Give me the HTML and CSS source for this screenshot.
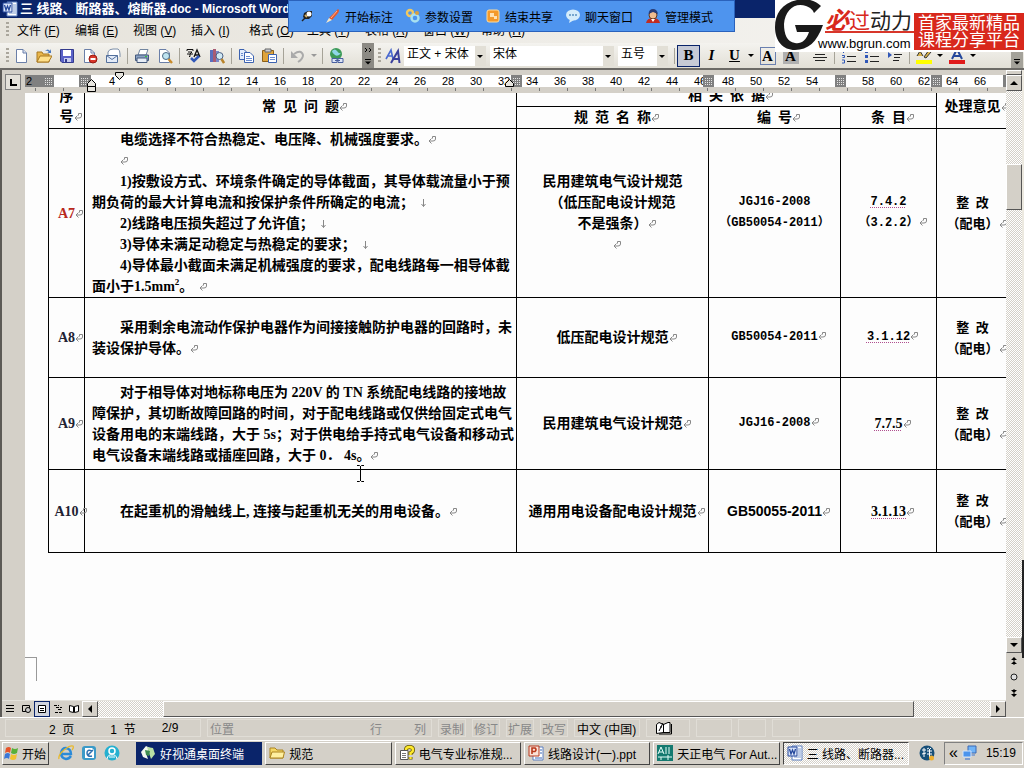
FILE: index.html
```html
<!DOCTYPE html>
<html lang="zh-CN">
<head>
    <meta charset="UTF-8">
    <meta name="viewport" content="width=device-width, initial-scale=1.0">
    <title>三 线路、断路器、熔断器.doc - Microsoft Word</title>
    <link rel="stylesheet" href="styles.css">
</head>
<body>
    <svg class="defs" aria-hidden="true">
        <symbol id="ret" viewBox="0 0 8 8"><path d="M3.500 2.500L1 5L3.500 7.500M1 5H5Q7.500 5 7.500 3V.5H4.500V2.500" fill="none" stroke="#888"/></symbol>
        <symbol id="down" viewBox="0 0 8 8"><path d="M3.500 0V7.500M1.500 5L3.500 7.500L5.500 5" fill="none" stroke="#888"/></symbol>
        <symbol id="word" viewBox="0 0 16 16"><path d="M5 1H15V15H5Z" fill="#fff" stroke="#5b7fc0"/><path d="M11 4H14M11 6H14M11 8H14M11 10H14M7 12H14" stroke="#7c9ad0"/><path d="M1 2H10V11H1Z" fill="#dbe6fa" stroke="#24479b"/><path d="M2.500 4L4 9L5.500 5L7 9L8.500 4" fill="none" stroke="#24479b" stroke-width="1.300"/></symbol>
    </svg>

    <header class="titlebar">
        <svg class="icon"><use href="#word"/></svg>
        <h1>三 线路、断路器、熔断器<span>.doc - Microsoft Word</span></h1>
    </header>

    <nav class="menubar">
        <i class="grip"></i>
        <a href="#">文件 (<u>F</u>)</a>
        <a href="#">编辑 (<u>E</u>)</a>
        <a href="#">视图 (<u>V</u>)</a>
        <a href="#">插入 (<u>I</u>)</a>
        <a href="#">格式 (<u>O</u>)</a>
        <a href="#">工具 (<u>T</u>)</a>
        <a href="#">表格 (<u>A</u>)</a>
        <a href="#">窗口 (<u>W</u>)</a>
        <a href="#">帮助 (<u>H</u>)</a>
    </nav>

    <div class="toolbar">
        <i class="grip"></i>
        <button aria-label="新建"><svg class="icon" viewBox="0 0 16 16"><path d="M3.500 1.500H10L13.500 5V14.500H3.500Z" fill="#fff" stroke="#6a7fa8"/><path d="M10 1.500V5H13.500" fill="#d8e2f4" stroke="#6a7fa8"/></svg></button>
        <button aria-label="打开"><svg class="icon" viewBox="0 0 16 16"><path d="M1 14V4H6L7 6H13V14Z" fill="#e9b64a" stroke="#a87820"/><path d="M1 14L4 8H16L12.500 14Z" fill="#ffe08a" stroke="#a87820"/><path d="M9 3Q12 0 14 3L15 1V5H11L13 4Q11 2 9 3" fill="#4a7ac0"/></svg></button>
        <button aria-label="保存"><svg class="icon" viewBox="0 0 16 16"><path d="M1.500 1.500H14.500V14.500H3L1.500 13Z" fill="#5a62c8" stroke="#333a8c"/><path d="M4 2H12V8H4Z" fill="#fff"/><path d="M5 10H12V14H5Z" fill="#c8cdf0"/><path d="M6 11H8V14H6Z" fill="#333a8c"/></svg></button>
        <button aria-label="权限"><svg class="icon" viewBox="0 0 16 16"><path d="M2.500 1.500H9L12.500 5V14.500H2.500Z" fill="#fff" stroke="#6a7fa8"/><path d="M9 1.500V5H12.500" fill="none" stroke="#6a7fa8"/><circle cx="11" cy="11" r="4" fill="#d8362a" stroke="#961a12"/><path d="M8.500 11H13.500" stroke="#fff" stroke-width="2"/></svg></button>
        <button aria-label="电子邮件"><svg class="icon" viewBox="0 0 16 16"><path d="M3 8V4Q4 1 8 1H13Q15 2 15 6V9" fill="#fff" stroke="#7b8ea8"/><path d="M1.500 7.500H12.500V14.500H1.500Z" fill="#e4ecf8" stroke="#54709c"/><path d="M1.500 7.500L7 11.500L12.500 7.500" fill="none" stroke="#54709c"/></svg></button>
        <i class="sep"></i>
        <button aria-label="打印"><svg class="icon" viewBox="0 0 16 16"><path d="M4 7L6 1.500H14L12 7Z" fill="#fff" stroke="#7286a0"/><path d="M1.500 7H14.500V12.500H1.500Z" fill="#8ba3c4" stroke="#44597c"/><path d="M3 10H13V14.500H3Z" fill="#e6edf6" stroke="#44597c"/><path d="M11 8.500H13" stroke="#3c3"/></svg></button>
        <button aria-label="打印预览"><svg class="icon" viewBox="0 0 16 16"><path d="M2.500 1.500H9L12.500 5V14.500H2.500Z" fill="#fff" stroke="#6a7fa8"/><circle cx="9" cy="8" r="3.500" fill="#bfe4f0" stroke="#4c6a84"/><path d="M11.500 11L15 15" stroke="#c88a2a" stroke-width="2.400"/></svg></button>
        <i class="sep"></i>
        <button aria-label="拼写和语法"><svg class="icon" viewBox="0 0 16 16"><path d="M1 3V1.500H7V3M2 4H6L4 6V8.500H3M1 6H7" fill="none" stroke="#111"/><path d="M8 9L11 2L14 9M9 7H13" fill="none" stroke="#111" stroke-width="1.300"/><path d="M5 10L8 13L13 8" fill="none" stroke="#3158b8" stroke-width="2.600"/></svg></button>
        <button aria-label="信息检索"><svg class="icon" viewBox="0 0 16 16"><path d="M1 2H4V14H1Z" fill="#5a6fbe"/><path d="M4 1H7V14H4Z" fill="#a85c74"/><path d="M7 3H10V14H7Z" fill="#7a88cc"/><circle cx="10.500" cy="8" r="3.500" fill="#cfe8f4" stroke="#4c5f84"/><path d="M12.500 11L15 15" stroke="#b8832a" stroke-width="2.400"/></svg></button>
        <i class="sep"></i>
        <button aria-label="复制"><svg class="icon" viewBox="0 0 16 16"><path d="M1.500 1.500H6L8.500 4V11.500H1.500Z" fill="#e4edfc" stroke="#3c62b0"/><path d="M6.500 4.500H12L15.500 8V14.500H6.500Z" fill="#fff" stroke="#3c62b0"/><path d="M8 8.500H12M8 10.500H14M8 12.500H14M3 5.500H5M3 7.500H5" stroke="#6b8cd0"/></svg></button>
        <button aria-label="粘贴"><svg class="icon" viewBox="0 0 16 16"><path d="M1.500 2.500H12.500V13.500H1.500Z" fill="#dfa43c" stroke="#8c6018"/><path d="M4 1H10V4H4Z" fill="#c9ccd4" stroke="#666"/><path d="M7.500 6.500H15.500V14.500H7.500Z" fill="#fff" stroke="#3c62b0"/><path d="M9 9.500H14M9 11.500H14" stroke="#6b8cd0"/></svg></button>
        <i class="sep"></i>
        <button aria-label="撤消" disabled><svg class="icon" viewBox="0 0 16 16"><path d="M4 6Q11 1 13 7Q13 11 8 14" fill="none" stroke="#aaa" stroke-width="2"/><path d="M1 3V10H8Z" fill="#aaa"/></svg></button>
        <button class="drop off" aria-label="撤消列表" disabled></button>
        <i class="sep"></i>
        <button aria-label="超链接"><svg class="icon" viewBox="0 0 16 16"><circle cx="7" cy="6" r="6" fill="#3d9a58"/><path d="M3 3Q6 0 8 3T12 5Q9 9 6 7T3 3" fill="#8fd6e8"/><path d="M3 10.500H8V14.500H3ZM9 10.500H14V14.500H9ZM6 12.500H11" fill="#dce4f6" stroke="#4a60a0"/></svg></button>
        <button class="more" aria-label="工具栏选项"><svg viewBox="0 0 12 25"><path d="M3 5L5 7L3 9M7 5L9 7L7 9M3 16.500H9" fill="none" stroke="#000"/><path d="M3 18.500H9L6 21.500Z"/></svg></button>
        <i class="grip"></i>
        <button aria-label="格式窗格"><svg class="icon" viewBox="0 0 16 16"><path d="M1 11L6 2L8 11M3 8H8" fill="none" stroke="#4a6ad0" stroke-width="1.600"/><path d="M6 15L13 3L14.500 15M9 11H14" fill="none" stroke="#3a3f9c" stroke-width="2"/></svg></button>
        <label class="combo style"><select aria-label="样式"><option>正文 + 宋体</option></select></label>
        <label class="combo font"><select aria-label="字体"><option>宋体</option></select></label>
        <label class="combo size"><select aria-label="字号"><option>五号</option></select></label>
        <i class="sep"></i>
        <button class="letter pressed"><b>B</b></button>
        <button class="letter"><em>I</em></button>
        <button class="letter"><u>U</u></button>
        <button class="drop" aria-label="下划线列表"></button>
        <button class="letter"><span class="framed">A</span></button>
        <button class="letter"><span class="shaded">A</span></button>
        <button class="align" aria-label="居中"><svg class="icon" viewBox="0 0 16 16"><path d="M1 3.500H15M3 6.500H13M1 9.500H15M3 12.500H13" stroke="#222"/></svg></button>
        <i class="sep"></i>
        <button aria-label="编号"><svg class="icon" viewBox="0 0 16 16"><path d="M2.500 1V5M1 7.500H3.500V9.500H1.500M1 12H3.500V15H1" fill="none" stroke="#3158b8"/><path d="M6 3.500H15M6 8.500H15M6 13.500H15" stroke="#222"/></svg></button>
        <button aria-label="项目符号"><svg class="icon" viewBox="0 0 16 16"><path d="M1 2H4V5H1ZM1 7H4V10H1ZM1 12H4V15H1Z" fill="#3158b8"/><path d="M6 3.500H15M6 8.500H15M6 13.500H15" stroke="#222"/></svg></button>
        <button aria-label="增加缩进量"><svg class="icon" viewBox="0 0 16 16"><path d="M1 3.500H15M7 6.500H15M7 9.500H13M6 12.500H12" stroke="#222"/><path d="M1 4L5 7L1 10Z" fill="#3158b8"/></svg></button>
        <i class="sep"></i>
        <button aria-label="突出显示"><svg class="icon" viewBox="0 0 16 16"><path d="M1 8L4 3L7 8M8 9L13 2L15 4L10 10Z" fill="#d8b24a" stroke="#333"/><path d="M0 12H16V16H0Z" fill="#ff0"/></svg></button>
        <button class="drop" aria-label="突出显示颜色"></button>
        <button aria-label="字体颜色"><svg class="icon" viewBox="0 0 16 16"><path d="M3 11L8 1L13 11M5 8H11" fill="none" stroke="#24479b" stroke-width="2"/><path d="M0 12H16V16H0Z" fill="#e01b1b"/></svg></button>
        <button class="drop" aria-label="字体颜色列表"></button>
        <button class="more last" aria-label="工具栏选项"><svg viewBox="0 0 12 25"><path d="M3 16.500H9" stroke="#000"/><path d="M3 18.500H9L6 21.500Z"/></svg></button>
    </div>

    <div class="workspace">
        <div class="editor">
            <div class="ruler">
                <button class="tabstop" aria-label="制表符"><svg viewBox="0 0 14 14"><path d="M5 4V10H11" fill="none" stroke="#000" stroke-width="2"/></svg></button>
                <div class="scale">
                    <span class="margin">2</span>
                    <span class="blank"></span>
                    <span>4</span><span>6</span><span>8</span><span>10</span><span>12</span><span>14</span><span>16</span><span>18</span><span>20</span><span>22</span><span>24</span><span>26</span><span>28</span><span>30</span><span>32</span><span>34</span><span>36</span><span>38</span><span>40</span><span>42</span><span>44</span><span>46</span><span>48</span><span>50</span><span>52</span><span>54</span><span></span><span>58</span><span>60</span><span>62</span><span>64</span><span>66</span>
                    <!-- column markers and indents sit over the scale -->
                    <svg class="markers" viewBox="0 0 981 23">
                        <defs><pattern id="dots" width="2" height="2" patternUnits="userSpaceOnUse"><path d="M0 0H1V1H0Z" fill="#e4e4e4"/></pattern></defs>
                        <path d="M54 5H66V17H54ZM486 5H497V17H486ZM678 5H689V17H678ZM810 5H821V17H810ZM906 5H917V17H906ZM978 5H981V17H978Z" fill="#808080"/>
                        <path d="M20 7H28V15H20ZM56 7H64V15H56ZM488 7H496V15H488ZM680 7H688V15H680ZM812 7H820V15H812ZM908 7H916V15H908Z" fill="url(#dots)"/>
                        <g fill="#e8e6e0" stroke="#000">
                            <path d="M90.500 2.500H98.500V5.500L94.500 9.500L90.500 5.500Z"/>
                            <path d="M62.500 16.500V13.500L66.500 9.500L70.500 13.500V16.500ZM62.500 16.500H70.500V21.500H62.500Z"/>
                            <path d="M480.500 16.500V13.500L484.500 9.500L488.500 13.500V16.500Z"/>
                        </g>
                    </svg>
                </div>
            </div>

            <main class="document">
                <div class="page">
                    <table>
                        <colgroup><col class="c-id"><col class="c-issue"><col class="c-name"><col class="c-code"><col class="c-item"><col class="c-opinion"></colgroup>
                        <thead>
                            <tr>
                                <th rowspan="2" class="no">序<br>号<svg class="mark"><use href="#ret"/></svg></th>
                                <th rowspan="2">常&nbsp;&nbsp;见&nbsp;&nbsp;问&nbsp;&nbsp;题<svg class="mark"><use href="#ret"/></svg></th>
                                <th colspan="3">相&nbsp;&nbsp;关&nbsp;&nbsp;依&nbsp;&nbsp;据<svg class="mark"><use href="#ret"/></svg></th>
                                <th rowspan="2">处理意见<svg class="mark"><use href="#ret"/></svg></th>
                            </tr>
                            <tr class="sub">
                                <th>规&nbsp;&nbsp;范&nbsp;&nbsp;名&nbsp;&nbsp;称<svg class="mark"><use href="#ret"/></svg></th>
                                <th>编&nbsp;&nbsp;号<svg class="mark"><use href="#ret"/></svg></th>
                                <th>条&nbsp;&nbsp;目<svg class="mark"><use href="#ret"/></svg></th>
                            </tr>
                        </thead>
                        <tbody>
                            <tr class="a7">
                                <td class="no red">A7<svg class="mark"><use href="#ret"/></svg></td>
                                <td class="issue">
                                    <p>电缆选择不符合热稳定、电压降、机械强度要求。<svg class="mark"><use href="#ret"/></svg></p>
                                    <p><svg class="mark"><use href="#ret"/></svg></p>
                                    <p>1)按敷设方式、环境条件确定的导体截面，其导体载流量小于预<br>期负荷的最大计算电流和按保护条件所确定的电流；<svg class="mark gap"><use href="#down"/></svg></p>
                                    <p>2)线路电压损失超过了允许值；<svg class="mark gap"><use href="#down"/></svg></p>
                                    <p>3)导体未满足动稳定与热稳定的要求；<svg class="mark gap"><use href="#down"/></svg></p>
                                    <p>4)导体最小截面未满足机械强度的要求，配电线路每一相导体截<br>面小于1.5mm<sup>2</sup>。<svg class="mark gap"><use href="#ret"/></svg></p>
                                </td>
                                <td>民用建筑电气设计规范<br>（低压配电设计规范<br>不是强条）<svg class="mark"><use href="#ret"/></svg><br><svg class="mark"><use href="#ret"/></svg></td>
                                <td class="code">JGJ16-2008<br>（GB50054-2011）</td>
                                <td class="code"><span class="spell">7.4.2</span><br>（3.2.2）<svg class="mark"><use href="#ret"/></svg></td>
                                <td class="opinion">整&nbsp; 改<br>（配电）<svg class="mark"><use href="#ret"/></svg></td>
                            </tr>
                            <tr class="a8">
                                <td class="no">A8<svg class="mark"><use href="#ret"/></svg></td>
                                <td class="issue">
                                    <p>采用剩余电流动作保护电器作为间接接触防护电器的回路时，未<br>装设保护导体。<svg class="mark"><use href="#ret"/></svg></p>
                                </td>
                                <td>低压配电设计规范<svg class="mark"><use href="#ret"/></svg></td>
                                <td class="code">GB50054-2011<svg class="mark"><use href="#ret"/></svg></td>
                                <td class="code"><span class="spell">3.1.12</span><svg class="mark"><use href="#ret"/></svg></td>
                                <td class="opinion">整&nbsp; 改<br>（配电）<svg class="mark"><use href="#ret"/></svg></td>
                            </tr>
                            <tr class="a9">
                                <td class="no">A9<svg class="mark"><use href="#ret"/></svg></td>
                                <td class="issue">
                                    <p>对于相导体对地标称电压为 220V 的 TN 系统配电线路的接地故<br>障保护，其切断故障回路的时间，对于配电线路或仅供给固定式电气<br>设备用电的末端线路，大于 5s；对于供电给手持式电气设备和移动式<br>电气设备末端线路或插座回路，大于 0．&nbsp;4s。<svg class="mark"><use href="#ret"/></svg></p>
                                </td>
                                <td>民用建筑电气设计规范<svg class="mark"><use href="#ret"/></svg></td>
                                <td class="code">JGJ16-2008<svg class="mark"><use href="#ret"/></svg></td>
                                <td><span class="spell">7.7.5</span><svg class="mark"><use href="#ret"/></svg></td>
                                <td class="opinion">整&nbsp; 改<br>（配电）<svg class="mark"><use href="#ret"/></svg></td>
                            </tr>
                            <tr class="a10">
                                <td class="no">A10<svg class="mark"><use href="#ret"/></svg></td>
                                <td class="issue">
                                    <p>在起重机的滑触线上, 连接与起重机无关的用电设备。<svg class="mark"><use href="#ret"/></svg></p>
                                </td>
                                <td>通用用电设备配电设计规范<svg class="mark"><use href="#ret"/></svg></td>
                                <td class="arial">GB50055-2011<svg class="mark"><use href="#ret"/></svg></td>
                                <td><span class="spell">3.1.13</span><svg class="mark"><use href="#ret"/></svg></td>
                                <td class="opinion">整&nbsp; 改<br>（配电）<svg class="mark"><use href="#ret"/></svg></td>
                            </tr>
                        </tbody>
                    </table>
                    <i class="corner"></i>
                </div>
                <svg class="ibeam" viewBox="0 0 9 17"><path d="M1 .5H3.500L4.500 1.500L5.500 .5H8M4.500 1V16M1 16.500H3.500L4.500 15.500L5.500 16.500H8" fill="none" stroke="#000"/></svg>
            </main>

            <div class="hscroll">
                <div class="views">
                    <button aria-label="普通视图"><svg viewBox="0 0 10 10"><path d="M1 1.500H9M1 4.500H9M1 7.500H9" stroke="#000"/></svg></button>
                    <button aria-label="Web版式"><svg viewBox="0 0 10 10"><path d="M1.500 1.500H8.500V7.500H1.500Z" fill="none" stroke="#000"/><circle cx="7" cy="6" r="2.500" fill="#ccc" stroke="#000"/></svg></button>
                    <button class="on" aria-label="页面视图"><svg viewBox="0 0 10 10"><path d="M1.500 1.500H8.500V8.500H1.500Z" fill="#fff" stroke="#000"/><path d="M3 4.500H7M3 6.500H7" stroke="#000"/></svg></button>
                    <button aria-label="大纲视图"><svg viewBox="0 0 10 10"><path d="M1 1.500H6M3 3.500H9M5 5.500H9M2 8.500H9" stroke="#000" stroke-dasharray="3 1"/></svg></button>
                    <button aria-label="阅读版式"><svg viewBox="0 0 10 10"><path d="M.5 1.500L4.500 2.500V8.500L.5 7.500ZM9.500 1.500L5.500 2.500V8.500L9.500 7.500Z" fill="#fff" stroke="#000"/></svg></button>
                </div>
                <button class="arrow" aria-label="向左"><svg viewBox="0 0 12 12"><path d="M8 2V10L4 6Z"/></svg></button>
                <div class="track"><div class="thumb"></div></div>
                <button class="arrow" aria-label="向右"><svg viewBox="0 0 12 12"><path d="M4 2V10L8 6Z"/></svg></button>
            </div>
        </div>

        <div class="vscroll">
            <i class="split"></i>
            <button class="arrow" aria-label="向上"><svg viewBox="0 0 12 12"><path d="M2 8H10L6 4Z"/></svg></button>
            <div class="track"><div class="thumb"></div></div>
            <button class="arrow" aria-label="向下"><svg viewBox="0 0 12 12"><path d="M2 4H10L6 8Z"/></svg></button>
            <button class="browse" aria-label="前一页"><svg viewBox="0 0 12 12"><path d="M3 5L6 2L9 5ZM5.500 5H6.500V6H5.500ZM3 9L6 6L9 9ZM5.500 9H6.500V10H5.500Z"/></svg></button>
            <button class="browse" aria-label="选择浏览对象"><svg viewBox="0 0 12 12"><circle cx="6" cy="6" r="3" fill="#ddd" stroke="#222"/></svg></button>
            <button class="browse" aria-label="下一页"><svg viewBox="0 0 12 12"><path d="M3 3L6 6L9 3ZM5.500 2H6.500V3H5.500ZM3 7L6 10L9 7ZM5.500 6H6.500V7H5.500Z"/></svg></button>
        </div>
        <div class="edge"></div>
    </div>

    <div class="statusbar">
        <div class="pane place"><span>2&nbsp; 页</span><span>1&nbsp; 节</span><span>2/9</span></div>
        <div class="pane pos"><span>位置</span><span class="row">行</span><span class="col">列</span></div>
        <span class="pane mode">录制</span>
        <span class="pane mode">修订</span>
        <span class="pane mode">扩展</span>
        <span class="pane mode">改写</span>
        <span class="pane lang">中文 (中国)</span>
        <span class="pane book"><svg viewBox="0 0 18 14"><path d="M1.500 3.500L4 1.500L8.500 3.500L13 1.500H15V11.500H8.500L1.500 12.500Z" fill="#fff" stroke="#000"/><path d="M8.500 3V12M4 10L8 2M5 6H7M16.500 3V13H4" fill="none" stroke="#000"/></svg></span>
        <span class="pane empty"></span>
        <span class="pane small"></span>
        <span class="pane small"></span>
    </div>

    <footer class="taskbar">
        <button class="start"><svg class="icon" viewBox="0 0 16 16"><path d="M2 3Q5 1 7 3L6 8Q4 6 1 8Z" fill="#e8542a"/><path d="M8 3Q11 5 14 3L13 8Q10 10 7 8Z" fill="#58b038"/><path d="M1 9Q4 7 6 9L5 14Q3 12 0 14Z" fill="#3b78d8"/><path d="M7 9Q10 11 13 9L12 14Q9 16 6 14Z" fill="#f2c230"/></svg>开始</button>
        <div class="quick">
            <a href="#" aria-label="Internet Explorer"><svg class="icon" viewBox="0 0 16 16"><path d="M13 11Q11 14 8 14Q3 13 3 8Q4 3 8 3Q13 4 13 9H4" fill="none" stroke="#2b8ad8" stroke-width="2.400"/><path d="M1 14Q0 10 6 5T15 1Q16 3 14 5" fill="none" stroke="#e8b92c" stroke-width="1.300"/></svg></a>
            <a href="#" aria-label="显示桌面"><svg class="icon" viewBox="0 0 16 16"><rect x="1" y="1" width="14" height="14" rx="3" fill="#3b9ac8"/><path d="M4 3H11L13 5V13H4Z" fill="#fff"/><path d="M12 5L7 10M11 6Q6 4 6 8T11 11" fill="none" stroke="#2a6fb0" stroke-width="1.500"/></svg></a>
            <a href="#" aria-label="会议"><svg class="icon" viewBox="0 0 16 16"><circle cx="8" cy="8" r="7.500" fill="#25b0d0"/><circle cx="8" cy="6" r="3" fill="none" stroke="#fff" stroke-width="1.500"/><path d="M3 14Q4 9 8 10Q12 9 13 14M5 12H11" fill="none" stroke="#fff"/></svg></a>
        </div>
        <div class="tasks">
            <button class="navy"><svg class="icon" viewBox="0 0 16 16"><path d="M1 7L6 1L10 3L6 8L8 14L3 12Z" fill="#f2f8ee"/><path d="M7 2L13 3L15 9L11 14L9 8Z" fill="#b9e0a4"/><path d="M5 5L10 6L9 11L6 10Z" fill="#3d8c50"/></svg><span>好视通桌面终端</span></button>
            <button><svg class="icon" viewBox="0 0 16 16"><path d="M1 13V3H6L8 5H14V13Z" fill="#f5d867" stroke="#ac8420"/><path d="M1 13L3 7H15.500L14 13Z" fill="#fff0a0" stroke="#ac8420"/></svg><span>规范</span></button>
            <button><svg class="icon" viewBox="0 0 16 16"><path d="M1.500 5.500H9V14.500H1.500Z" fill="#fff" stroke="#555"/><path d="M3 8.500H7M3 10.500H7M3 12.500H7" stroke="#777"/><path d="M7 5Q7 2 10.500 2T14 5Q14 7 11.500 8V10M11.500 12V14.500" fill="none" stroke="#665800" stroke-width="4"/><path d="M7 5Q7 2 10.500 2T14 5Q14 7 11.500 8V10M11.500 12V14" fill="none" stroke="#ffe92c" stroke-width="2.400"/></svg><span>电气专业标准规...</span></button>
            <button><svg class="icon" viewBox="0 0 16 16"><path d="M5 2H15V15H5Z" fill="#fff" stroke="#5b7fc0"/><path d="M12 5H14M12 8H14M7 13H14" stroke="#7c9ad0" stroke-width="1.500"/><path d="M1 1H11V11H1Z" fill="#fbe2d8" stroke="#b8391c"/><path d="M4 9V3H7Q9 4.500 7 6.500H4" fill="none" stroke="#b8391c" stroke-width="1.600"/></svg><span>线路设计(一).ppt</span></button>
            <button><svg class="icon" viewBox="0 0 16 16"><path d="M0 0H16V16H0Z" fill="#147a70"/><path d="M1 9L4 2L7 9M2 7H6M9 2V9M12 2V9M1 12H15M11 10V15M4 12V15" fill="none" stroke="#e6fffa"/></svg><span>天正电气 For Aut...</span></button>
            <button class="active"><svg class="icon"><use href="#word"/></svg><span>三 线路、断路器...</span></button>
        </div>
        <a href="#" class="ime" aria-label="输入法"><svg class="icon" viewBox="0 0 16 16"><circle cx="8" cy="8" r="7.500" fill="#174f78"/><path d="M3 5H7M5 3V12M3 9L7 8M8 4L10 3M12 3L10 5M8 6H13M8 9H13M10.500 5V13" fill="none" stroke="#fff"/><circle cx="12.500" cy="13" r="2.500" fill="#f0b030"/></svg></a>
        <div class="tray">
            <span class="expand">«</span>
            <svg class="icon" viewBox="0 0 16 16"><path d="M6 1H14V8H6Z" fill="#70b4f8" stroke="#3a68b4"/><path d="M9 9H13V11H9Z" fill="#8aa4cc"/><path d="M1 6H9V12H1Z" fill="#4c94ec" stroke="#d4e4fa"/><path d="M3 13H8V15H3Z" fill="#7f9ccc"/></svg>
            <time>15:19</time>
        </div>
    </footer>

    <!-- floating screen-share bar -->
    <div class="sharebar">
        <button aria-label="固定"><svg class="pin" viewBox="0 0 12 12"><path d="M3 3L7 1H11V6L8 9H4L2 7Z" fill="#222"/><circle cx="8" cy="4" r="2.500" fill="#fff"/><path d="M4 5L6 7" stroke="#d8b060" stroke-width="2"/><path d="M1 11L4 8" stroke="#222" stroke-width="1.500"/></svg></button>
        <button><svg class="icon" viewBox="0 0 16 16"><path d="M13 1Q15 2 13 5L7 12L4 10Z" fill="#e8582c"/><path d="M4 10L7 12L1 15Z" fill="#f4e6c8"/><path d="M12 3L6 10" stroke="#ffb090"/></svg>开始标注</button>
        <button><svg class="icon" viewBox="0 0 16 16"><circle cx="5" cy="5" r="3" fill="none" stroke="#f0c860" stroke-width="2.400"/><circle cx="10" cy="10" r="3.500" fill="none" stroke="#a8e0f0" stroke-width="2.400"/><circle cx="12" cy="5" r="2" fill="#d8a040"/></svg>参数设置</button>
        <button><svg class="icon" viewBox="0 0 16 16"><rect x="2" y="2" width="12" height="12" rx="2" fill="#f49a2c" stroke="#ffdc9c"/><path d="M5 5H9V9H5ZM9 8H12V11H9Z" fill="#ffe2b4"/></svg>结束共享</button>
        <button><svg class="icon" viewBox="0 0 16 16"><ellipse cx="8" cy="7" rx="7" ry="5.500" fill="#d4ecfa"/><path d="M5 11L4 15L9 12Z" fill="#d4ecfa"/><path d="M4 7H6M7 7H9M10 7H12" stroke="#5890c0" stroke-width="1.500"/></svg>聊天窗口</button>
        <button><svg class="icon" viewBox="0 0 16 16"><path d="M1 15Q2 10 8 10T15 15Z" fill="#c02c20"/><circle cx="8" cy="7" r="4" fill="#f0bc90" stroke="#603820"/><path d="M3.500 6Q4 1 8 1T13 6L8 4Z" fill="#283c78"/><path d="M6 11L8 14L10 11Z" fill="#fff"/></svg>管理模式</button>
    </div>

    <div class="brand">
        <svg class="logo" viewBox="0 0 50 52"><path d="M46 6C40 0 31 -2 22 0C7 3 0 14 0 27C0 41 8 50 20 50C33 50 42 42 48 25H20L22 32H34C31 41 26 44 20 43C12 42 9 34 9 24C10 10 20 2 31 6C36 8 38 10 39 13Z" fill="#1a1a1a"/></svg>
        <div class="brandtext">
            <strong><em>必</em><span>过</span>动力</strong>
            <small>www.bgrun.com</small>
        </div>
        <p class="slogan">首家最新精品<br>课程分享平台</p>
    </div>
</body>
</html>
```
FILE: styles.css
```css
* {
    box-sizing: border-box;
}
body {
    margin: 0;
    height: 100vh;
    display: flex;
    flex-direction: column;
    overflow: hidden;
    background: #d4d0c8;
    color: #000;
    font-family: "Liberation Sans", "Noto Sans CJK SC", sans-serif;
    font-size: 12px;
    text-spacing-trim: space-all;
}
button {
    margin: 0;
    padding: 0;
    border: none;
    background: none;
    color: inherit;
    font: inherit;
}
a {
    color: inherit;
    text-decoration: none;
}
svg {
    display: block;
}
.defs {
    position: absolute;
    width: 0;
    height: 0;
}
.icon {
    width: 16px;
    height: 16px;
    flex: none;
}

/* title and menu */
.titlebar {
    flex: none;
    display: flex;
    align-items: center;
    gap: 2px;
    height: 18px;
    padding-left: 2px;
    background: #0a246a;
    color: #fff;
}
.titlebar h1 {
    margin: 0;
    font-size: 13px;
    line-height: 18px;
    white-space: nowrap;
}
.titlebar h1 span {
    font-size: 12px;
}
.menubar {
    flex: none;
    display: flex;
    align-items: center;
    height: 25px;
    padding: 0 0 2px 6px;
    background: linear-gradient(to right, #e6e3db, #f6f5f2);
}
.menubar a {
    width: 58px;
    white-space: nowrap;
}
.grip {
    flex: none;
    width: 3px;
    height: 15px;
    margin-right: 8px;
    background: repeating-linear-gradient(#aaa69c 0 2px, transparent 2px 4px);
}

/* toolbar */
.toolbar {
    flex: none;
    display: flex;
    align-items: center;
    height: 27px;
    padding-left: 6px;
    background: linear-gradient(#f4f3ef, #e2dfd6);
    border-bottom: 2px solid #6c6a66;
}
.toolbar .grip {
    margin-right: 0;
}
.toolbar button {
    flex: none;
    display: flex;
    align-items: center;
    justify-content: center;
    width: 23px;
    height: 22px;
}
.toolbar .sep {
    flex: none;
    width: 6px;
    height: 16px;
    background: linear-gradient(#a6a398, #a6a398) 3px 0 / 1px 100% no-repeat;
}
.toolbar .drop {
    width: 10px;
}
.drop::before {
    content: "";
    border: 3px solid transparent;
    border-top-color: #000;
    border-bottom: none;
}
.drop.off::before {
    border-top-color: #999;
}
.toolbar .more {
    width: 12px;
    height: 25px;
    margin: 0 4px 0 14px;
    background: #8c8a84;
}
.toolbar .more.last {
    margin: 0 1px 0 auto;
    background: #a4a29a;
}
.more svg {
    width: 12px;
    height: 25px;
}
.combo {
    position: relative;
    flex: none;
    height: 20px;
    margin-right: 4px;
    background: #fff;
}
.combo select {
    display: block;
    width: 100%;
    height: 100%;
    padding: 0 0 4px 3px;
    border: none;
    background: transparent;
    color: #000;
    font: inherit;
    appearance: none;
}
.combo::after {
    content: "";
    position: absolute;
    right: 3px;
    top: 9px;
    border: 3px solid transparent;
    border-top-color: #000;
    border-bottom: none;
}
.combo.style {
    width: 82px;
    background: linear-gradient(to right, #fff 71px, #e2dfd6 71px);
}
.combo.font {
    width: 124px;
    background: linear-gradient(to right, #fff 113px, #e2dfd6 113px);
}
.combo.size {
    width: 50px;
    margin-right: 3px;
    background: linear-gradient(to right, #fff 39px, #e2dfd6 39px);
}
.toolbar .letter {
    font-family: "Liberation Serif", serif;
    font-size: 15px;
    font-weight: bold;
}
.toolbar .pressed {
    background: #c6cad6;
    border: 1px solid #0a246a;
}
.framed {
    width: 16px;
    line-height: 16px;
    border: 1px solid #6a80b0;
}
.shaded {
    width: 16px;
    line-height: 16px;
    background: #b0b0b0;
}
.toolbar .align {
    margin-left: 6px;
}

/* workspace */
.workspace {
    flex: 1;
    display: flex;
    min-height: 0;
}
.editor {
    flex: 1;
    min-width: 0;
    display: flex;
    flex-direction: column;
    border-left: 2px solid #5c5a56;
}
.ruler {
    flex: none;
    display: flex;
    align-items: center;
    gap: 4px;
    height: 23px;
    padding-left: 3px;
}
.tabstop {
    flex: none;
    width: 16px;
    height: 16px;
    border: 1px solid #808080;
    background: #e4e1da;
}
.scale {
    position: relative;
    flex: 1;
    display: flex;
    height: 23px;
    overflow: hidden;
    background:
        repeating-linear-gradient(to right, transparent 0 10px, #777 10px 11px, transparent 11px 28px) 0 18px / 100% 3px no-repeat,
        linear-gradient(#fff, #fff) 0 5px / 100% 12px no-repeat;
}
.scale span {
    flex: none;
    width: 28px;
    font-size: 11px;
    line-height: 23px;
    text-align: center;
}
.scale .margin {
    width: 29px;
    height: 12px;
    margin-top: 5px;
    padding-left: 1px;
    background: #808080;
    line-height: 12px;
    text-align: left;
}
.scale .blank {
    width: 44px;
}
.markers {
    position: absolute;
    left: 0;
    top: 0;
    width: 981px;
    height: 23px;
}
.document {
    position: relative;
    flex: 1;
    min-height: 0;
    padding-left: 23px;
    overflow: hidden;
}
.page {
    position: relative;
    height: 100%;
    padding-left: 23px;
    background: #fdfdfd;
    overflow: hidden;
}

/* document table */
table {
    width: 960px;
    margin-top: -8px;
    border-collapse: collapse;
    table-layout: fixed;
    font-family: "Liberation Serif", "Noto Sans CJK SC", serif;
    font-size: 14px;
    font-weight: bold;
    line-height: 21px;
    text-align: center;
    white-space: nowrap;
}
.c-id { width: 36px; }
.c-issue { width: 432px; }
.c-name { width: 192px; }
.c-code { width: 132px; }
.c-item { width: 96px; }
.c-opinion { width: 72px; }
th, td {
    height: 21px;
    padding: 0;
    border: 1px solid #000;
}
.sub th {
    height: 22px;
}
.a7 td { height: 168px; }
.a8 td { height: 80px; }
.a9 td { height: 92px; }
.a10 td { height: 83px; }
th {
    line-height: 20px;
}
.no {
    color: #223;
}
th.no {
    color: #000;
}
.no.red {
    color: #b8281c;
}
td.issue {
    padding-left: 7px;
    text-align: left;
}
.issue p {
    margin: 0;
    text-indent: 28px;
}
.issue sup {
    font-size: 9px;
    line-height: 0;
}
.code {
    font-family: "Liberation Mono", "Noto Sans CJK SC", monospace;
    font-size: 12px;
}
.arial {
    font-family: "Liberation Sans", sans-serif;
}
.opinion {
    font-size: 13px;
}
.spell {
    text-decoration: underline dotted #b05090 1px;
    text-underline-offset: 2px;
}
/* paragraph marks hang after the text and take no room in the line */
.mark {
    display: inline-block;
    width: 8px;
    height: 8px;
    margin-right: -8px;
    vertical-align: 0;
}
.mark.gap {
    margin-left: 6px;
}
.corner {
    position: absolute;
    left: 0;
    bottom: 19px;
    width: 12px;
    height: 24px;
    border: 1px solid #999;
    border-left: none;
    border-bottom: none;
}
.ibeam {
    position: absolute;
    left: 354px;
    top: 372px;
    width: 9px;
    height: 17px;
}

/* scroll bars */
.track {
    flex: 1;
    background: repeating-conic-gradient(#fff 0 25%, #d4d0c8 0 50%) 0 0 / 2px 2px;
}
.thumb, .arrow, .split {
    background: #d4d0c8;
    border: 1px solid;
    border-color: #fff #555 #555 #fff;
}
.arrow {
    flex: none;
    width: 16px;
    height: 16px;
}
.arrow svg, .browse svg {
    width: 12px;
    height: 12px;
    margin: auto;
}
.hscroll {
    flex: none;
    display: flex;
    height: 17px;
    border-top: 1px solid #e4e2dc;
}
.views {
    flex: none;
    display: flex;
    width: 80px;
}
.views button {
    width: 16px;
    height: 16px;
}
.views .on {
    border: 1px solid #0a246a;
    background: #d0d4de;
}
.views svg {
    width: 10px;
    height: 10px;
    margin: auto;
}
.hscroll .thumb {
    height: 16px;
    margin: 0 76px 0 65px;
}
.vscroll {
    flex: none;
    display: flex;
    flex-direction: column;
    width: 16px;
}
.split {
    flex: none;
    height: 5px;
}
.vscroll .thumb {
    height: 46px;
    margin-top: 73px;
}
.browse {
    flex: none;
    height: 16px;
}
.browse:last-child {
    margin-bottom: 16px;
}
.edge {
    flex: none;
    width: 2px;
    background: linear-gradient(#ece9e0 490px, #222 490px 588px, #d4d0c8 588px);
}

/* status bar */
.statusbar {
    flex: none;
    display: flex;
    gap: 6px;
    height: 23px;
    padding: 1px 0 0 5px;
    border-top: 1px solid #fff;
}
.pane {
    flex: none;
    display: flex;
    align-items: center;
    height: 18px;
    border: 1px solid #e0ddd6;
    color: #888;
    white-space: nowrap;
}
.place {
    gap: 26px;
    width: 196px;
    padding-left: 43px;
    color: #000;
}
.place span + span {
    margin-left: 10px;
}
.place span + span + span {
    margin-left: 0;
}
.pos {
    width: 225px;
    padding-left: 2px;
}
.row {
    margin-left: 136px;
}
.col {
    margin-left: 32px;
}
.mode {
    justify-content: center;
    width: 28px;
}
.lang {
    width: 66px;
    padding-left: 2px;
    color: #000;
}
.book {
    width: 44px;
    padding-left: 8px;
}
.book svg {
    width: 18px;
    height: 14px;
}
.empty {
    width: 36px;
}
.small {
    width: 28px;
}

/* task bar */
.taskbar {
    flex: none;
    display: flex;
    align-items: center;
    height: 28px;
    padding: 0 0 3px 2px;
    border-top: 1px solid #fff;
}
.taskbar button {
    display: flex;
    align-items: center;
    height: 23px;
    border: 1px solid;
    border-color: #fff #444 #444 #fff;
    white-space: nowrap;
}
.start {
    flex: none;
    gap: 2px;
    width: 47px;
    padding-left: 1px;
}
.quick {
    flex: none;
    display: flex;
    gap: 7px;
    width: 87px;
    padding-left: 9px;
}
.tasks {
    flex: 1;
    min-width: 0;
    display: flex;
    gap: 3px;
}
.tasks button {
    flex: 1;
    min-width: 0;
    gap: 4px;
    padding-left: 3px;
    overflow: hidden;
}
.tasks .navy {
    background: #0a246a;
    border-color: #0a246a;
    color: #fff;
}
.tasks .active {
    border-color: #444 #fff #fff #444;
    background: repeating-conic-gradient(#fff 0 25%, #d4d0c8 0 50%) 0 0 / 2px 2px;
}
.ime {
    flex: none;
    width: 31px;
    padding-left: 10px;
}
.tray {
    flex: none;
    display: flex;
    align-items: center;
    gap: 4px;
    width: 79px;
    height: 23px;
    margin: 0 1px 0 4px;
    padding-left: 4px;
    border: 1px solid;
    border-color: #808080 #fff #fff #808080;
}
.expand {
    font-size: 16px;
    line-height: 16px;
}
.tray time {
    margin-left: 4px;
}

/* floating items */
.sharebar {
    position: absolute;
    left: 288px;
    top: 0;
    display: flex;
    align-items: center;
    gap: 12px;
    width: 447px;
    height: 32px;
    padding-left: 12px;
    border: 1px solid #2a62bc;
    background: #4e94ee;
}
.sharebar button {
    display: flex;
    align-items: center;
    gap: 4px;
    white-space: nowrap;
}
.pin {
    width: 12px;
    height: 12px;
}
.brand {
    position: absolute;
    right: 0;
    top: 0;
    display: flex;
    width: 249px;
    height: 52px;
    background: #fff;
}
.logo {
    flex: none;
    width: 50px;
    height: 52px;
}
.brandtext {
    flex: none;
    width: 89px;
    padding-top: 6px;
}
.brandtext strong {
    display: flex;
    align-items: center;
    height: 27px;
    border-bottom: 2px solid #d8362a;
    font-size: 21px;
    font-weight: normal;
    color: #222;
}
.brandtext em {
    font-size: 24px;
    font-weight: bold;
    color: #d8281c;
}
.brandtext strong span {
    color: #d8281c;
}
.brandtext small {
    display: block;
    margin-left: -7px;
    font-size: 13px;
    line-height: 22px;
}
.slogan {
    flex: 1;
    margin: 13px 0 2px;
    padding: 2px 0 0 4px;
    background: #d8281c;
    color: #fff;
    font-size: 17px;
    line-height: 17px;
    white-space: nowrap;
}
```
